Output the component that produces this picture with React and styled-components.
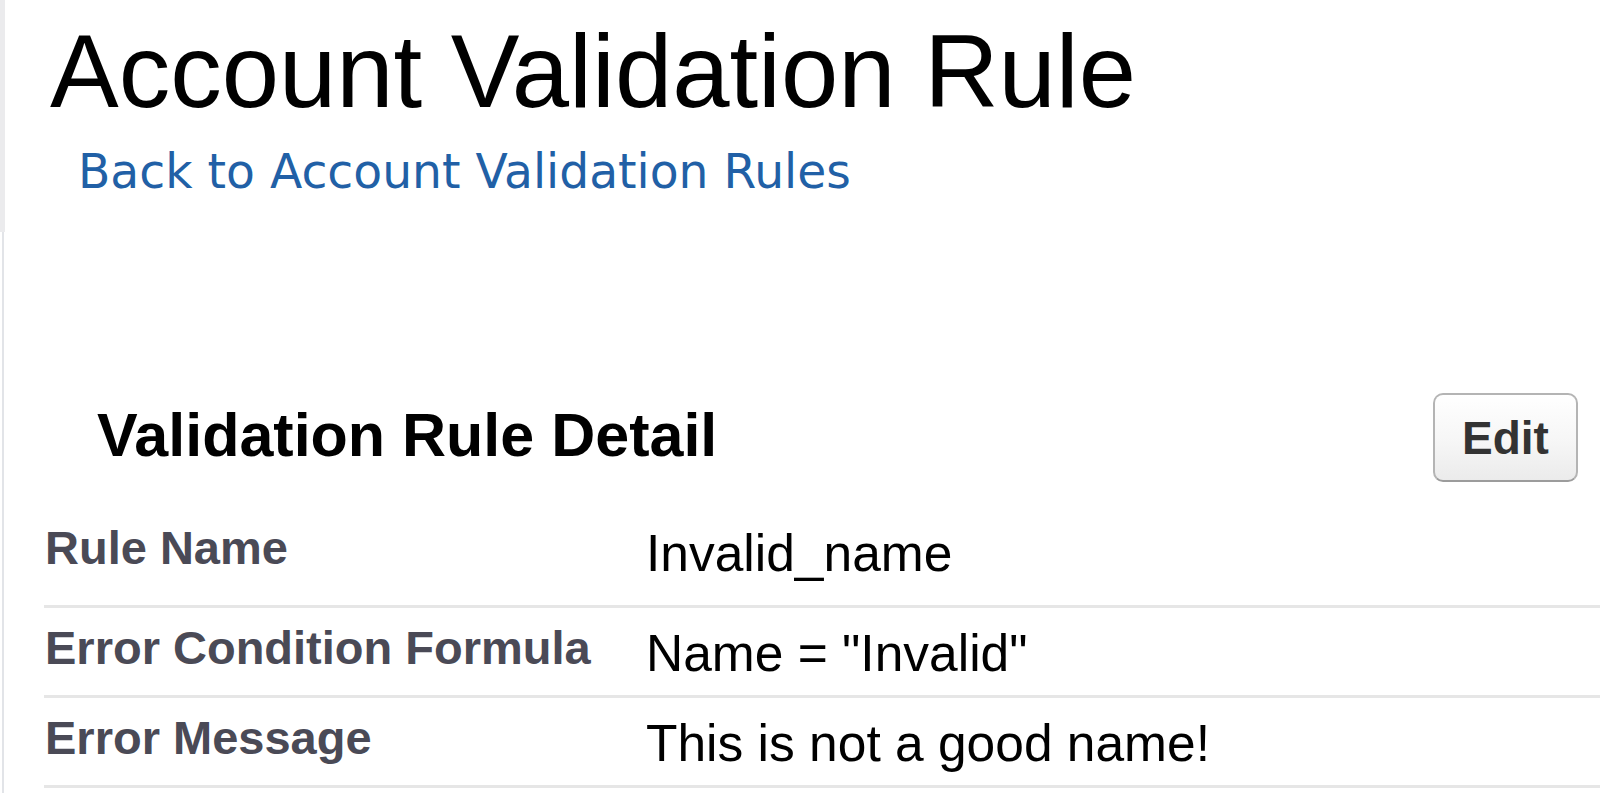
import React from 'react';
import styled, { createGlobalStyle } from 'styled-components';

const GlobalStyle = createGlobalStyle`
  html, body {
    margin: 0;
    padding: 0;
    background: #ffffff;
  }
  body {
    font-family: "Liberation Sans", Arial, sans-serif;
    overflow: hidden;
  }
`;

const details = [
  { label: 'Rule Name', value: 'Invalid_name' },
  { label: 'Error Condition Formula', value: 'Name = "Invalid"' },
  { label: 'Error Message', value: 'This is not a good name!' },
];

export default function App() {
  return (
    <>
      <GlobalStyle />
      <Page>
        <Sidebar>
          <SidebarTop />
          <SidebarLine />
        </Sidebar>
        <Main>
          <Title>Account Validation Rule</Title>
          <BackLink href="#">Back to Account Validation Rules</BackLink>
          <DetailHeader>
            <DetailTitle>Validation Rule Detail</DetailTitle>
            <EditButton type="button">Edit</EditButton>
          </DetailHeader>
          <DetailTable>
            {details.map((d) => (
              <DetailRow key={d.label}>
                <Label>{d.label}</Label>
                <Value>{d.value}</Value>
              </DetailRow>
            ))}
          </DetailTable>
        </Main>
      </Page>
    </>
  );
}

const Page = styled.div`
  display: flex;
  min-height: 100vh;
`;

const Sidebar = styled.div`
  width: 5px;
  display: flex;
  flex-direction: column;
  flex-shrink: 0;
`;

const SidebarTop = styled.div`
  height: 232px;
  background: #ebebed;
`;

const SidebarLine = styled.div`
  flex: 1;
  width: 2px;
  margin-left: 2px;
  background: #e2e4e8;
`;

const Main = styled.div`
  flex: 1;
  display: flex;
  flex-direction: column;
  padding-top: 20px;
`;

const Title = styled.h1`
  margin: 0 0 0 45px;
  font-family: "Liberation Sans", Arial, sans-serif;
  font-weight: 400;
  font-size: 103px;
  line-height: 1;
  color: #000000;
`;

const BackLink = styled.a`
  align-self: flex-start;
  margin: 25px 0 0 73px;
  font-family: "DejaVu Sans", Verdana, sans-serif;
  font-size: 47.2px;
  line-height: 1;
  color: #2160a6;
  text-decoration: none;
`;

const DetailHeader = styled.div`
  display: flex;
  align-items: center;
  justify-content: space-between;
  margin: 198px 22px 0 92px;
`;

const DetailTitle = styled.h2`
  margin: 0 0 5px 0;
  font-family: "Liberation Sans", Arial, sans-serif;
  font-weight: 700;
  font-size: 61px;
  line-height: 1;
  color: #000000;
`;

const EditButton = styled.button`
  width: 145px;
  height: 89px;
  box-sizing: border-box;
  padding: 0;
  border: 2px solid #b4b4b4;
  border-bottom-color: #9c9c9c;
  border-radius: 10px;
  background: linear-gradient(#ffffff 0%, #f6f6f6 55%, #ebebeb 100%);
  font-family: "Liberation Sans", Arial, sans-serif;
  font-weight: 700;
  font-size: 46px;
  line-height: 1;
  color: #333333;
  cursor: pointer;
`;

const DetailTable = styled.div`
  display: flex;
  flex-direction: column;
  margin: 26px 0 0 39px;
`;

const DetailRow = styled.div`
  display: flex;
  align-items: flex-start;
  height: 90px;
  box-sizing: border-box;
  padding: 16px 0 0 1px;
  border-bottom: 3px solid #e6e6e6;

  &:first-child {
    height: 100px;
  }
`;

const Label = styled.div`
  width: 601px;
  flex-shrink: 0;
  font-family: "Liberation Sans", Arial, sans-serif;
  font-weight: 700;
  font-size: 47px;
  line-height: 1;
  color: #4a4a56;
`;

const Value = styled.div`
  margin-top: 4px;
  font-family: "Liberation Sans", Arial, sans-serif;
  font-weight: 400;
  font-size: 51.5px;
  line-height: 1;
  color: #000000;
`;
